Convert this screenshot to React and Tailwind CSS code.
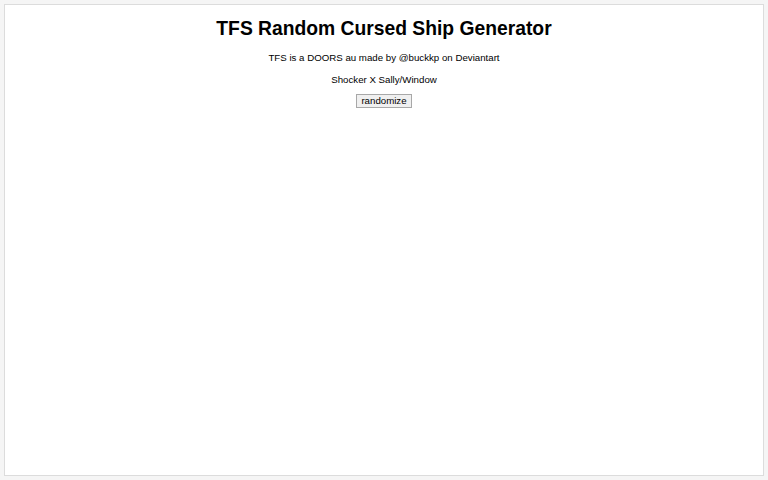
import React, { useState } from 'react'

const ships = ['Shocker X Sally/Window', 'Figure X Seek', 'Rush X Ambush', 'Screech X Halt']

export default function App() {
    const [ship, setShip] = useState(ships[0])

    const randomize = () => {
        setShip(ships[Math.floor(Math.random() * ships.length)])
    }

    return (
        <div className="h-[480px] bg-[#f5f5f5] p-[4px] font-['Liberation_Sans',Arial,sans-serif] text-black">
            <div className="h-full bg-white border border-[#dcdcdc] flex flex-col items-center">
                <h1 className="mt-[14px] text-[19.3px] leading-[20px] font-bold">TFS Random Cursed Ship Generator</h1>
                <p className="mt-[13px] text-[9.7px] leading-[12px]">TFS is a DOORS au made by @buckkp on Deviantart</p>
                <p className="mt-[10px] text-[9.7px] leading-[12px]">{ship}</p>
                <button
                    onClick={randomize}
                    className="mt-[8px] h-[14px] px-[4px] text-[9.7px] leading-[12px] bg-[#f0f0f0] border border-[#a8a8a8]"
                >
                    randomize
                </button>
            </div>
        </div>
    )
}
